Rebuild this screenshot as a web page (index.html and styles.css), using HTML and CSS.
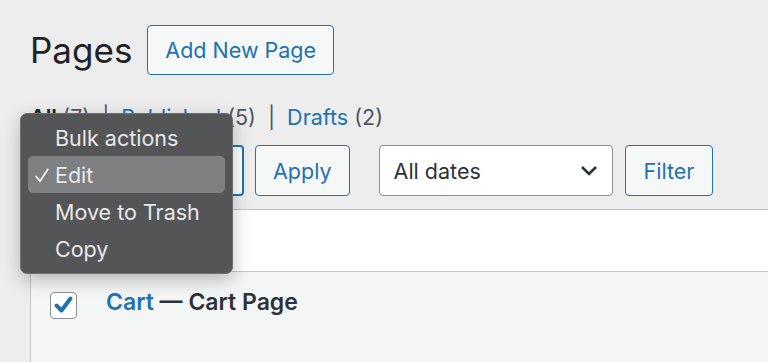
FILE: index.html
```html
<!DOCTYPE html>
<html>
<head>
    <title>Pages</title>
    <link rel="stylesheet" href="styles.css">
</head>
<body>
    <div class="wrap">
        <div class="title-row">
            <h1>Pages</h1>
            <a class="title-action" href="#">Add New Page</a>
        </div>

        <ul class="subsubsub">
            <li><a class="current" href="#">All <span class="count">(7)</span></a><span class="sep">|</span></li>
            <li><a href="#">Published</a> <span class="count">(5)</span><span class="sep">|</span></li>
            <li><a href="#">Drafts</a> <span class="count">(2)</span></li>
        </ul>

        <div class="tablenav">
            <div class="select bulk-select">Bulk actions</div>
            <button class="button">Apply</button>
            <div class="select date-select">
                <span>All dates</span>
                <svg class="chevron" width="18" height="11" viewBox="0 0 18 11">
                    <path d="M2 2 L9 9 L16 2" fill="none" stroke="#2c3338" stroke-width="2.6"/>
                </svg>
            </div>
            <button class="button">Filter</button>
        </div>

        <div class="list-table">
            <div class="table-head">
                <span class="checkbox"></span>
                <span class="col-title">Title</span>
            </div>
            <div class="table-row">
                <span class="checkbox checked">
                    <svg width="21" height="21" viewBox="0 0 21 21">
                        <path d="M3.5 10.5 L8.5 15.5 L17.5 3.5" fill="none" stroke="#2271b1" stroke-width="4" stroke-linecap="round" stroke-linejoin="round"/>
                    </svg>
                </span>
                <span class="row-title"><a href="#">Cart</a> — Cart Page</span>
            </div>
        </div>

        <!-- native select popup, open over the bulk actions box -->
        <div class="select-menu">
            <div class="menu-item">Bulk actions</div>
            <div class="menu-item selected">
                <svg class="tick" width="14" height="15" viewBox="0 0 14 15">
                    <path d="M1.2 8.5 L5 13.2 L12.8 1.2" fill="none" stroke="#ececec" stroke-width="1.9" stroke-linecap="round" stroke-linejoin="round"/>
                </svg>
                Edit
            </div>
            <div class="menu-item">Move to Trash</div>
            <div class="menu-item">Copy</div>
        </div>
    </div>
</body>
</html>
```

FILE: styles.css
```css
body {
    margin: 0;
    background: #ededed;
    font-family: Inter, "Noto Sans", sans-serif;
    color: #2c3338;
    overflow: hidden;
}

.wrap {
    position: relative;
    padding: 25px 0 0 30px;
}

/* Heading */
.title-row {
    display: flex;
    align-items: center;
    gap: 15px;
}
h1 {
    margin: 0;
    font-size: 35px;
    font-weight: 400;
    color: #1d2327;
}
.title-action {
    display: flex;
    align-items: center;
    height: 48px;
    padding: 0 17px;
    border: 1px solid #2271b1;
    border-radius: 4px;
    background: #f6f7f7;
    color: #2271b1;
    font-size: 21.5px;
    text-decoration: none;
}

/* Status links */
.subsubsub {
    list-style: none;
    display: flex;
    margin: 30px 0 0;
    padding: 0;
    font-size: 21.5px;
    line-height: 24px;
    color: #50575e;
}
.subsubsub a {
    color: #2271b1;
    text-decoration: none;
}
.subsubsub a.current {
    color: #1d2327;
    font-weight: 600;
}
.subsubsub .current .count {
    font-weight: 400;
    color: #50575e;
}
.sep {
    margin: 0 12px;
    color: #50575e;
}

/* Filters */
.tablenav {
    display: flex;
    align-items: center;
    margin-top: 16px;
    height: 51px;
}
.select {
    display: flex;
    align-items: center;
    box-sizing: border-box;
    height: 51px;
    background: #fff;
    font-size: 21.5px;
    border-radius: 4px;
}
.bulk-select {
    width: 214px;
    padding: 0 14px;
    border: 2px solid #2271b1;
}
.date-select {
    width: 234px;
    margin: 0 12px 0 29px;
    padding: 0 14px;
    justify-content: space-between;
    border: 1px solid #8c8f94;
}
.button {
    box-sizing: border-box;
    height: 51px;
    padding: 0 17px;
    margin-left: 11px;
    border: 1px solid #2271b1;
    border-radius: 4px;
    background: #f6f7f7;
    color: #2271b1;
    font-family: inherit;
    font-size: 21.5px;
}
.date-select + .button {
    margin-left: 0;
    padding: 0 18px;
}

/* List table */
.list-table {
    margin-top: 13px;
    margin-right: -2px;
    border: 1px solid #c3c4c7;
    background: #fff;
}
.table-head {
    display: flex;
    align-items: center;
    height: 61px;
    padding-left: 19px;
    border-bottom: 1px solid #c3c4c7;
    font-size: 21.5px;
}
.table-row {
    display: flex;
    align-items: flex-start;
    height: 100px;
    padding: 20px 0 0 19px;
    background: #f4f5f5;
}
.checkbox {
    display: flex;
    align-items: center;
    justify-content: center;
    box-sizing: border-box;
    width: 27px;
    height: 27px;
    border: 1px solid #8c8f94;
    border-radius: 4px;
    background: #fff;
}
.col-title {
    margin-left: 29px;
}
.row-title {
    margin-left: 29px;
    margin-top: -4px;
    font-size: 23px;
    font-weight: 600;
    color: #2c3338;
}
.row-title a {
    color: #2271b1;
    text-decoration: none;
}

/* Open select popup */
.select-menu {
    position: absolute;
    left: 20px;
    top: 113px;
    width: 213px;
    box-sizing: border-box;
    padding: 5px 7px 6px;
    background: #545557;
    border: 1px solid #6e6f71;
    border-radius: 7px;
    box-shadow: 0 6px 18px rgba(0, 0, 0, 0.25);
    color: #e8e8e8;
    font-size: 21.5px;
}
.menu-item {
    display: flex;
    align-items: center;
    height: 37px;
    padding-left: 27px;
    border-radius: 5px;
}
.menu-item.selected {
    background: #7f8082;
}
.tick {
    margin-left: -20px;
    margin-right: 6px;
    margin-top: 2px;
}
```
